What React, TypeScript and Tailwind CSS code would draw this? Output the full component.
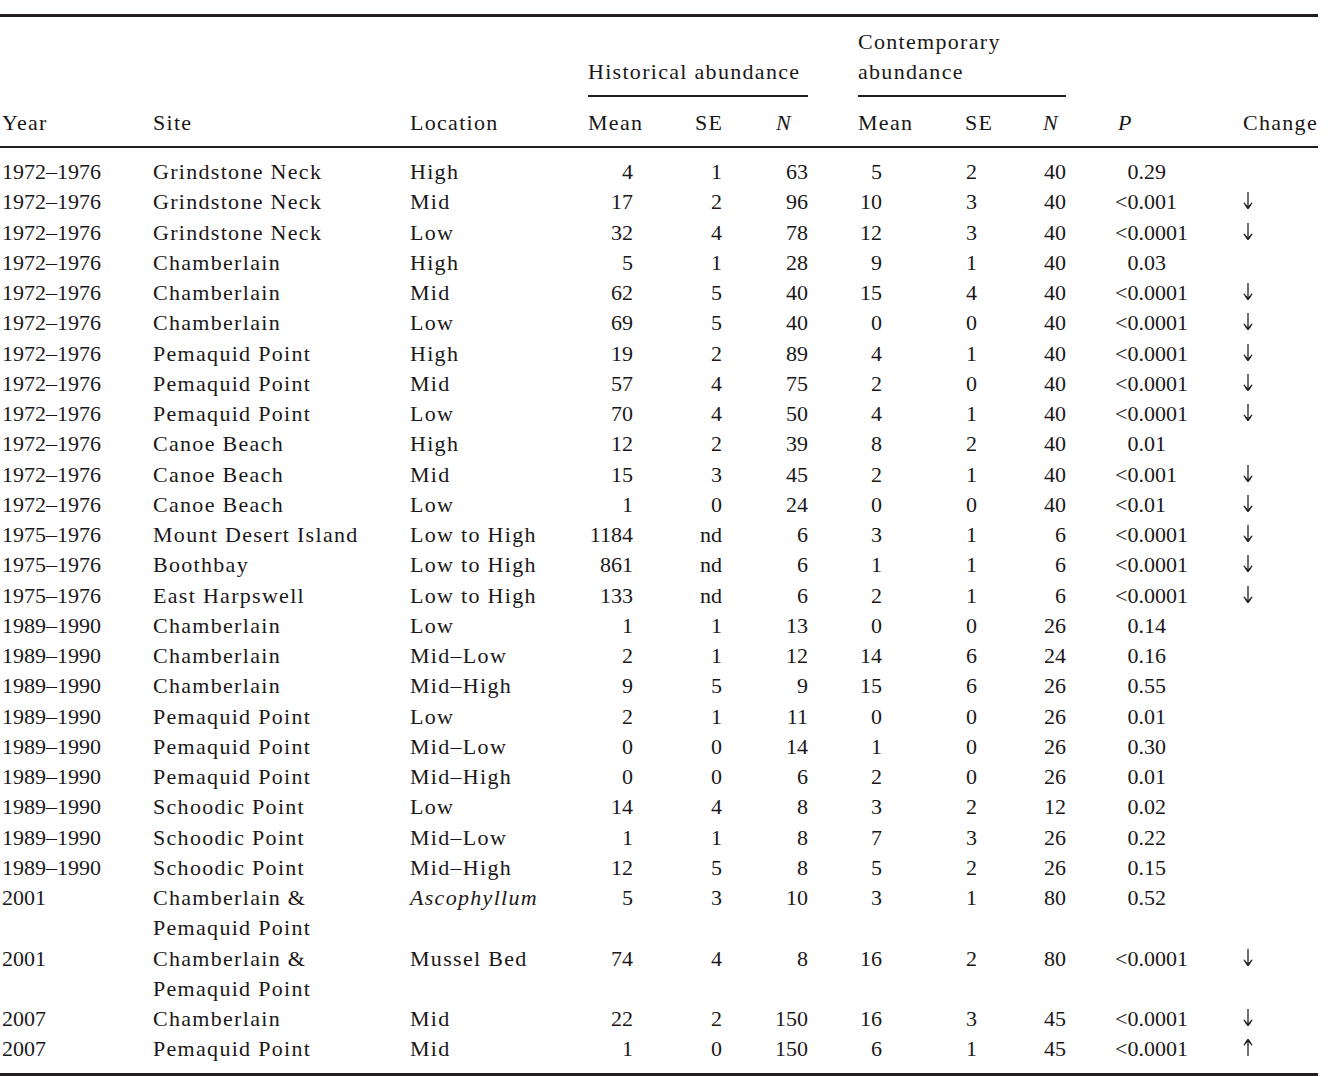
import React from "react";

type Row = {
  y: string;
  s: React.ReactNode;
  l: React.ReactNode;
  hm: string;
  hse: string;
  hn: string;
  cm: string;
  cse: string;
  cn: string;
  p: string;
  c?: "d" | "u";
};

const D = "d" as const;
const U = "u" as const;
const CP = (
  <>
    Chamberlain &amp;
    <br />
    Pemaquid Point
  </>
);

const rows: Row[] = [
  { y: "1972–1976", s: "Grindstone Neck", l: "High", hm: "4", hse: "1", hn: "63", cm: "5", cse: "2", cn: "40", p: "0.29" },
  { y: "1972–1976", s: "Grindstone Neck", l: "Mid", hm: "17", hse: "2", hn: "96", cm: "10", cse: "3", cn: "40", p: "<0.001", c: D },
  { y: "1972–1976", s: "Grindstone Neck", l: "Low", hm: "32", hse: "4", hn: "78", cm: "12", cse: "3", cn: "40", p: "<0.0001", c: D },
  { y: "1972–1976", s: "Chamberlain", l: "High", hm: "5", hse: "1", hn: "28", cm: "9", cse: "1", cn: "40", p: "0.03" },
  { y: "1972–1976", s: "Chamberlain", l: "Mid", hm: "62", hse: "5", hn: "40", cm: "15", cse: "4", cn: "40", p: "<0.0001", c: D },
  { y: "1972–1976", s: "Chamberlain", l: "Low", hm: "69", hse: "5", hn: "40", cm: "0", cse: "0", cn: "40", p: "<0.0001", c: D },
  { y: "1972–1976", s: "Pemaquid Point", l: "High", hm: "19", hse: "2", hn: "89", cm: "4", cse: "1", cn: "40", p: "<0.0001", c: D },
  { y: "1972–1976", s: "Pemaquid Point", l: "Mid", hm: "57", hse: "4", hn: "75", cm: "2", cse: "0", cn: "40", p: "<0.0001", c: D },
  { y: "1972–1976", s: "Pemaquid Point", l: "Low", hm: "70", hse: "4", hn: "50", cm: "4", cse: "1", cn: "40", p: "<0.0001", c: D },
  { y: "1972–1976", s: "Canoe Beach", l: "High", hm: "12", hse: "2", hn: "39", cm: "8", cse: "2", cn: "40", p: "0.01" },
  { y: "1972–1976", s: "Canoe Beach", l: "Mid", hm: "15", hse: "3", hn: "45", cm: "2", cse: "1", cn: "40", p: "<0.001", c: D },
  { y: "1972–1976", s: "Canoe Beach", l: "Low", hm: "1", hse: "0", hn: "24", cm: "0", cse: "0", cn: "40", p: "<0.01", c: D },
  { y: "1975–1976", s: "Mount Desert Island", l: "Low to High", hm: "1184", hse: "nd", hn: "6", cm: "3", cse: "1", cn: "6", p: "<0.0001", c: D },
  { y: "1975–1976", s: "Boothbay", l: "Low to High", hm: "861", hse: "nd", hn: "6", cm: "1", cse: "1", cn: "6", p: "<0.0001", c: D },
  { y: "1975–1976", s: "East Harpswell", l: "Low to High", hm: "133", hse: "nd", hn: "6", cm: "2", cse: "1", cn: "6", p: "<0.0001", c: D },
  { y: "1989–1990", s: "Chamberlain", l: "Low", hm: "1", hse: "1", hn: "13", cm: "0", cse: "0", cn: "26", p: "0.14" },
  { y: "1989–1990", s: "Chamberlain", l: "Mid–Low", hm: "2", hse: "1", hn: "12", cm: "14", cse: "6", cn: "24", p: "0.16" },
  { y: "1989–1990", s: "Chamberlain", l: "Mid–High", hm: "9", hse: "5", hn: "9", cm: "15", cse: "6", cn: "26", p: "0.55" },
  { y: "1989–1990", s: "Pemaquid Point", l: "Low", hm: "2", hse: "1", hn: "11", cm: "0", cse: "0", cn: "26", p: "0.01" },
  { y: "1989–1990", s: "Pemaquid Point", l: "Mid–Low", hm: "0", hse: "0", hn: "14", cm: "1", cse: "0", cn: "26", p: "0.30" },
  { y: "1989–1990", s: "Pemaquid Point", l: "Mid–High", hm: "0", hse: "0", hn: "6", cm: "2", cse: "0", cn: "26", p: "0.01" },
  { y: "1989–1990", s: "Schoodic Point", l: "Low", hm: "14", hse: "4", hn: "8", cm: "3", cse: "2", cn: "12", p: "0.02" },
  { y: "1989–1990", s: "Schoodic Point", l: "Mid–Low", hm: "1", hse: "1", hn: "8", cm: "7", cse: "3", cn: "26", p: "0.22" },
  { y: "1989–1990", s: "Schoodic Point", l: "Mid–High", hm: "12", hse: "5", hn: "8", cm: "5", cse: "2", cn: "26", p: "0.15" },
  { y: "2001", s: CP, l: <i>Ascophyllum</i>, hm: "5", hse: "3", hn: "10", cm: "3", cse: "1", cn: "80", p: "0.52" },
  { y: "2001", s: CP, l: "Mussel Bed", hm: "74", hse: "4", hn: "8", cm: "16", cse: "2", cn: "80", p: "<0.0001", c: D },
  { y: "2007", s: "Chamberlain", l: "Mid", hm: "22", hse: "2", hn: "150", cm: "16", cse: "3", cn: "45", p: "<0.0001", c: D },
  { y: "2007", s: "Pemaquid Point", l: "Mid", hm: "1", hse: "0", hn: "150", cm: "6", cse: "1", cn: "45", p: "<0.0001", c: U },
];

const COLS =
  "grid grid-cols-[153px_257px_178px_107px_80px_83px_105px_79px_73px_115px_88px]";

function Arrow({ dir }: { dir: "d" | "u" }) {
  return (
    <svg
      width="10"
      height="17"
      viewBox="0 0 10 17"
      className={dir === "u" ? "block rotate-180" : "block"}
      fill="none"
      stroke="#231f20"
      strokeWidth="1.3"
      strokeLinecap="round"
      strokeLinejoin="round"
    >
      <line x1="5" y1="0.5" x2="5" y2="16" />
      <path d="M1.2 11.2 L5 16.3 L8.8 11.2" />
      <path d="M3 13.5 L5 16 L7 13.5" strokeWidth="1.6" />
    </svg>
  );
}

function DataRow({ r }: { r: Row }) {
  return (
    <div className={COLS + " leading-[30.25px]"}>
      <div className="pl-[2px]">{r.y}</div>
      <div className="tracking-[1.3px]">{r.s}</div>
      <div className="tracking-[1.3px]">{r.l}</div>
      <div className="text-right pr-[62px]">{r.hm}</div>
      <div className="text-right pr-[53px]">{r.hse}</div>
      <div className="text-right pr-[50px]">{r.hn}</div>
      <div className="text-right pr-[81px]">{r.cm}</div>
      <div className="text-right pr-[65px]">{r.cse}</div>
      <div className="text-right pr-[49px]">{r.cn}</div>
      <div>
        {r.p.startsWith("<") ? (
          r.p
        ) : (
          <>
            <span className="invisible">&lt;</span>
            {r.p}
          </>
        )}
      </div>
      <div className="pl-[13px] pt-[5px]">{r.c ? <Arrow dir={r.c} /> : null}</div>
    </div>
  );
}

export default function App() {
  return (
    <div className="w-[1342px] min-h-[1076px] bg-white text-[#1a1718] font-['Liberation_Serif','Times_New_Roman',serif] text-[22px] pt-[14px]">
      <div className="w-[1318px]">
        <div className="h-[3px] bg-[#231f20]" />

        <div className={COLS + " pt-[10px] leading-[30px]"}>
          <div className="col-span-3" />
          <div className="col-span-3 flex flex-col justify-end">
            <div className="tracking-[1.3px]">Historical abundance</div>
            <div className="mt-[8px] h-[2px] bg-[#231f20] mr-[50px]" />
          </div>
          <div className="col-span-3 flex flex-col justify-end">
            <div className="tracking-[1.3px]">
              Contemporary
              <br />
              abundance
            </div>
            <div className="mt-[8px] h-[2px] bg-[#231f20] mr-[49px]" />
          </div>
          <div className="col-span-2" />
        </div>

        <div className={COLS + " pt-[11px] pb-[8px] leading-[30px] tracking-[1.3px]"}>
          <div className="pl-[2px]">Year</div>
          <div>Site</div>
          <div>Location</div>
          <div>Mean</div>
          <div>SE</div>
          <div className="italic pl-[1px]">N</div>
          <div>Mean</div>
          <div className="pl-[2px]">SE</div>
          <div className="italic pl-[1px]">N</div>
          <div className="italic pl-[3px]">P</div>
          <div className="text-right">Change</div>
        </div>
        <div className="h-[2px] bg-[#231f20]" />

        <div className="pt-[9px] pb-[8px]">
          {rows.map((r, i) => (
            <DataRow key={i} r={r} />
          ))}
        </div>
        <div className="h-[3px] bg-[#231f20]" />
      </div>
    </div>
  );
}
